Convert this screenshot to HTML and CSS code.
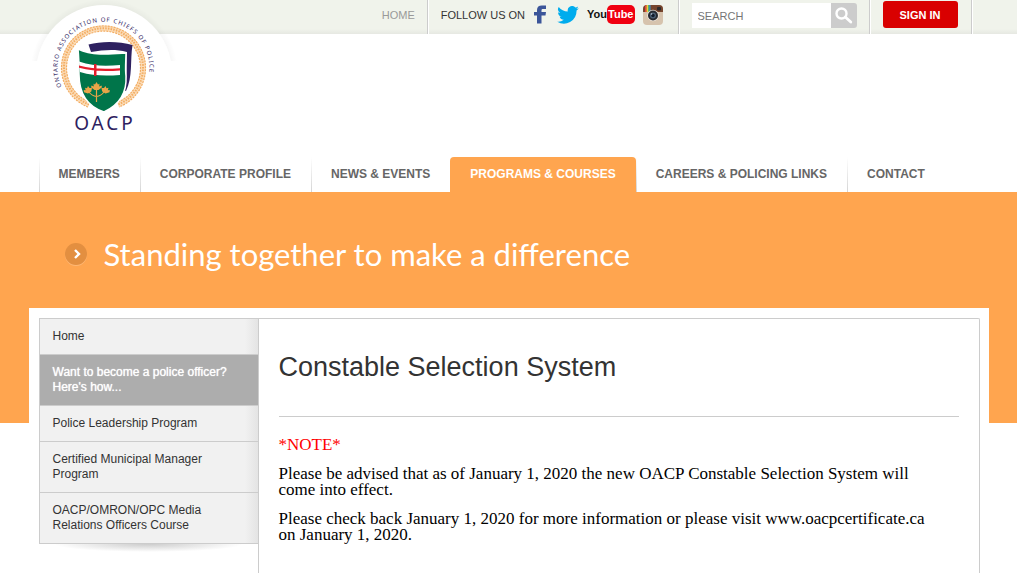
FILE: index.html
```html
<!DOCTYPE html>
<html lang="en">
  <head>
    <meta charset="utf-8" />
    <title>Constable Selection System - OACP</title>
    <meta name="viewport" content="width=device-width, initial-scale=1.0" />
    <link rel="stylesheet" href="styles.css" />
  </head>
  <body>
    <header class="header">
      <div class="topbar">
        <div class="container topbar-inner">
          <div class="top-item top-home"><a href="#">HOME</a></div>
          <div class="top-item top-follow">
            <span>FOLLOW US ON</span>
            <a class="facebook" href="#" aria-label="Facebook">
              <svg width="12" height="19" viewBox="0 0 12 19">
                <path d="M3 18.500V10.500H0V7h3V5C3 1.800 5 .5 7.700.5H12V4H9.200C8 4 7.500 4.500 7.500 5.400V7H12l-.5 3.500h-4v8z" fill="#3b5599" />
              </svg>
            </a>
            <a class="twitter" href="#" aria-label="Twitter">
              <svg width="22" height="18" viewBox="0 0 24 20">
                <path d="M24 2.400a10 10 0 0 1-2.800.8A5 5 0 0 0 23.300.5a10 10 0 0 1-3.100 1.200 4.900 4.900 0 0 0-8.400 4.500A14 14 0 0 1 1.700 1a4.900 4.900 0 0 0 1.500 6.600A5 5 0 0 1 1 7a4.900 4.900 0 0 0 3.900 4.900 5 5 0 0 1-2.200.1 4.900 4.900 0 0 0 4.600 3.400A10 10 0 0 1 0 17.400 14 14 0 0 0 21.500 5.500v-.6A10 10 0 0 0 24 2.400z" fill="#00aced" />
              </svg>
            </a>
            <a class="youtube" href="#" aria-label="YouTube">
              <span class="you">You</span><span class="tube">Tube</span>
            </a>
            <a class="instagram" href="#" aria-label="Instagram">
              <svg width="20" height="20" viewBox="0 0 20 20">
                <rect width="20" height="20" rx="4" fill="#d6c3ad" />
                <path d="M0 7V4a4 4 0 0 1 4-4h12a4 4 0 0 1 4 4v3z" fill="#76452d" />
                <path d="M2 .6h1.500V7H2z" fill="#e8423f" />
                <path d="M3.500 0H5v7H3.500z" fill="#f4c93c" />
                <path d="M5 0h1.300v7H5z" fill="#55b866" />
                <path d="M6.300 0h1.200v7H6.300z" fill="#3b9bd5" />
                <rect x="14" y="2" width="4" height="3.500" rx="1" fill="#2c292a" />
                <circle cx="10" cy="10.500" r="5.800" fill="#eee5db" />
                <circle cx="10" cy="10.500" r="5" fill="#272a30" />
                <circle cx="10" cy="10.500" r="3" fill="#4b6176" />
                <circle cx="10" cy="10.500" r="1.700" fill="#111b29" />
                <circle cx="8.500" cy="9" r=".8" fill="#bcc9d4" />
              </svg>
            </a>
          </div>
          <form class="top-item search" onsubmit="return false">
            <input type="text" placeholder="SEARCH" aria-label="Search" />
            <button type="submit" aria-label="Go">
              <svg width="18" height="17" viewBox="0 0 18 17">
                <circle cx="6.500" cy="6.500" r="5" fill="none" stroke="#fff" stroke-width="2.400" />
                <path d="M10.300 10l5.500 5" stroke="#fff" stroke-width="2.800" stroke-linecap="round" />
              </svg>
            </button>
          </form>
          <div class="top-item top-sign"><button type="button" class="sign-in">SIGN IN</button></div>
        </div>
      </div>

      <div class="container header-body">
        <a class="logo" href="#" aria-label="OACP home">
          <svg width="150" height="140" viewBox="0 0 150 140">
            <defs>
              <radialGradient id="halo">
                <stop offset=".9" stop-color="#000" stop-opacity=".04" />
                <stop offset="1" stop-color="#000" stop-opacity="0" />
              </radialGradient>
              <clipPath id="haloClip"><path d="M0 0h150v61H0z" /></clipPath>
              <path id="nameArc" d="M32.500 86.500A46 46 0 1 1 116.500 86.500" />
            </defs>
            <g clip-path="url(#haloClip)">
              <circle cx="75" cy="73" r="74" fill="url(#halo)" />
              <circle cx="75" cy="73" r="68" fill="#fff" />
            </g>
            <!-- braided ring, open at the bottom -->
            <g fill="none" stroke="#f3ad62">
              <path d="M60 104.500A39.500 39.500 0 1 1 89 104.500" stroke-width="5.500" stroke="#fbdcb8" />
              <path d="M59 107A42 42 0 1 1 90 107" stroke-width="1.200" stroke-dasharray="2 1" />
              <path d="M60 104.500A39.500 39.500 0 1 1 89 104.500" stroke-width="2" stroke-dasharray="1.500 1.200" />
              <path d="M61 102.500A37 37 0 1 1 88 102.500" stroke-width="1.200" stroke-dasharray="2 1" />
            </g>
            <text class="logo-name"><textPath href="#nameArc">ONTARIO ASSOCIATION OF CHIEFS OF POLICE</textPath></text>
            <!-- shield -->
            <path d="M59.500 44.500C72 41 90 41 103.500 45 101 60 104 77 97 91l-2-1c4-12 2-25 3-38-12-3-23-2-36 0z" fill="#2e2160" />
            <path d="M49 49c15 7 33 5 48 4 0 8-1 15 0 23 1 17-7 29-22 36-21-7-25-25-25-38 0-10 0-16-1-25z" fill="#00754a" stroke="#fff" stroke-width="1.500" />
            <path d="M50 61.500c14 5 28 4.500 41 3.500v10c-14 1-27 1-40-3z" fill="#fff" />
            <path d="M50 65.500c14 4 28 3.500 41 2.700v2.300c-14 1-27 1-41-2.700zM65 64h2.500v12H65z" fill="#e51d2b" />
            <g fill="#e9a548">
              <path d="M67.500 82l1.500 2.500 1.500-.8-.3 2.800 2.300-1 .5 1.700-3.500 2.800h-4l-3.500-2.800.5-1.700 2.300 1-.3-2.800 1.500.8z" />
              <path d="M59 86l1.500 2 2.500 0-.7 3.500-3.300 2-4-1.200-.3-2.300 2 .3-.7-2.600 2 .5zM76.500 86l-1.500 2-2.500 0 .7 3.500 3.300 2 4-1.200.3-2.300-2 .3.700-2.600-2 .5z" />
              <path d="M60 92q3 4 7.500 4.500Q72 96 75 92M67.500 89v13" fill="none" stroke="#e9a548" stroke-width="1.200" />
            </g>
            <text class="logo-short" x="76" y="130" text-anchor="middle">OACP</text>
          </svg>
        </a>
        <nav class="nav">
          <a href="#">MEMBERS</a>
          <a href="#">CORPORATE PROFILE</a>
          <a href="#">NEWS &amp; EVENTS</a>
          <a href="#" class="active">PROGRAMS &amp; COURSES</a>
          <a href="#">CAREERS &amp; POLICING LINKS</a>
          <a href="#">CONTACT</a>
        </nav>
      </div>
    </header>

    <div class="page">
      <div class="container slogan">
        <svg width="22" height="23" viewBox="0 0 22 23">
          <circle cx="11" cy="12" r="11" fill="#ffb875" />
          <circle cx="11" cy="11" r="11" fill="#e38f40" />
          <path d="M10 7l4 4-4 4" fill="none" stroke="#fff" stroke-width="2.400" />
        </svg>
        <span>Standing together to make a difference</span>
      </div>

      <div class="container main">
        <div class="frame">
          <aside class="sidebar">
            <ul>
              <li><a href="#">Home</a></li>
              <li><a href="#" class="active">Want to become a police officer? Here's how...</a></li>
              <li><a href="#">Police Leadership Program</a></li>
              <li><a href="#">Certified Municipal Manager Program</a></li>
              <li><a href="#">OACP/OMRON/OPC Media Relations Officers Course</a></li>
            </ul>
            <div class="sidebar-shadow"></div>
          </aside>
          <main class="content">
            <h1>Constable Selection System</h1>
            <p class="note">*NOTE*</p>
            <p>Please be advised that as of January 1, 2020 the new OACP Constable Selection System will come into effect.</p>
            <p>Please check back January 1, 2020 for more information or please visit www.oacpcertificate.ca on January 1, 2020.</p>
          </main>
        </div>
      </div>
    </div>
  </body>
</html>
```
FILE: styles.css
```css
/* Base styles */
* {
  box-sizing: border-box;
}

body {
  display: flex;
  flex-direction: column;
  min-height: 100vh;
  margin: 0;
  background: #fff;
  color: #333;
  font-family: Arial, "Liberation Sans", sans-serif;
  font-size: 12px;
}

a {
  color: inherit;
  text-decoration: none;
}

svg {
  display: block;
}

.container {
  width: 100%;
  max-width: 960px;
  margin: 0 auto;
}

/* Top bar */
.topbar {
  background: linear-gradient(#f0f3eb 29px, #e6e8e2 34px);
}

.topbar-inner {
  display: flex;
  justify-content: flex-end;
  height: 34px;
  padding-right: 17px;
  font-size: 11px;
}

.top-item {
  display: flex;
  align-items: center;
  height: 34px;
  padding: 0 12px 5px;
  border-right: 1px solid #ccc;
  box-shadow: 1px 0 #fff;
}

.top-home {
  color: #999;
}

.top-follow {
  padding-right: 15px;
  padding-left: 13px;
}

.facebook {
  margin-left: 9px;
}

.twitter {
  margin-left: 11px;
}

.youtube {
  display: flex;
  align-items: center;
  margin-left: 8px;
  font-weight: bold;
  font-size: 11px;
  line-height: 19px;
}

.you {
  color: #111;
}

.tube {
  padding: 0 1px;
  border-radius: 5px;
  background: #f00010;
  color: #fff;
}

.instagram {
  margin-left: 8px;
}

.search {
  padding: 0 12px 3px 13px;
}

.search input {
  width: 139px;
  height: 25px;
  padding: 0 6px;
  border: 0;
  border-radius: 0;
  background: #fff;
  color: #333;
  font: 11px Arial, "Liberation Sans", sans-serif;
}

.search input::placeholder {
  color: #757575;
}

.search button {
  display: flex;
  align-items: center;
  justify-content: center;
  width: 26px;
  height: 25px;
  padding: 0;
  border: 0;
  border-radius: 0 3px 3px 0;
  background: #ccc;
}

.top-sign {
  padding: 0 13px 5px;
}

.sign-in {
  width: 75px;
  height: 27px;
  padding: 0;
  border: 0;
  border-radius: 3px;
  background: #d90000;
  color: #fff;
  font: bold 11px Arial, "Liberation Sans", sans-serif;
}

/* Logo and main navigation */
.header-body {
  position: relative;
  padding: 123px 0 0 10px;
}

.logo {
  position: absolute;
  top: -34px;
  left: 0;
}

.logo-name {
  fill: #2e2160;
  font: 6px "Noto Sans", sans-serif;
  letter-spacing: 1px;
}

.logo-short {
  fill: #2e2160;
  font: 19px "Noto Sans", sans-serif;
  letter-spacing: 3px;
}

.nav {
  display: flex;
  height: 35px;
  color: #666;
  font-weight: bold;
  line-height: 34px;
  white-space: nowrap;
}

.nav a {
  padding: 0 20px;
  background: linear-gradient(#fff, #d5d5d5) left / 1px 100% no-repeat;
}

.nav .active {
  border-radius: 4px 4px 0 0;
  background: #ffa54f;
  color: #fff;
}

/* Orange band behind the slogan and the top of the main box */
.page {
  display: flex;
  flex: 1;
  flex-direction: column;
  background: linear-gradient(#ffa54f, #ffa54f) top / 100% 231px no-repeat;
}

.slogan {
  display: flex;
  align-items: center;
  gap: 17px;
  height: 116px;
  padding: 8px 36px 0;
  color: #fff;
  font-family: Lato, sans-serif;
  font-size: 31px;
  line-height: 36px;
}

.main {
  display: flex;
  flex: 1;
  padding: 10px 9px 0 10px;
  background: #fff;
}

.frame {
  display: flex;
  flex: 1;
  border-top: 1px solid #ccc;
  border-right: 1px solid #ccc;
  border-top-right-radius: 2px;
}

/* Sidebar */
.sidebar {
  width: 219px;
  line-height: 15px;
}

.sidebar ul {
  margin: 0;
  padding: 0;
  border-left: 1px solid #ccc;
  list-style-type: none;
}

.sidebar a {
  display: block;
  padding: 10px 24px 10px 13px;
  border-bottom: 1px solid #ccc;
  background: linear-gradient(to right, #f1f1f1 205px, #e4e4e4 218px);
}

.sidebar .active {
  background: #adadad;
  color: #fff;
  text-shadow: 0 0 1px #fff;
}

.sidebar-shadow {
  height: 8px;
  margin: 0 14px;
  background: radial-gradient(ellipse at top, #ccc, #fff 70%);
}

/* Content */
.content {
  flex: 1;
  padding: 0 20px;
  border-left: 1px solid #ccc;
  color: #000;
  font-family: Georgia, "Liberation Serif", serif;
  font-size: 17px;
  line-height: 16px;
}

.content h1 {
  margin: 0 0 20px;
  padding: 32px 0 33px;
  border-bottom: 1px solid #ccc;
  color: #333;
  font: 27px/32px Arial, "Liberation Sans", sans-serif;
}

.content p {
  margin: 0 0 13px;
  padding-right: 20px;
}

.content .note {
  color: #f00;
}
```
